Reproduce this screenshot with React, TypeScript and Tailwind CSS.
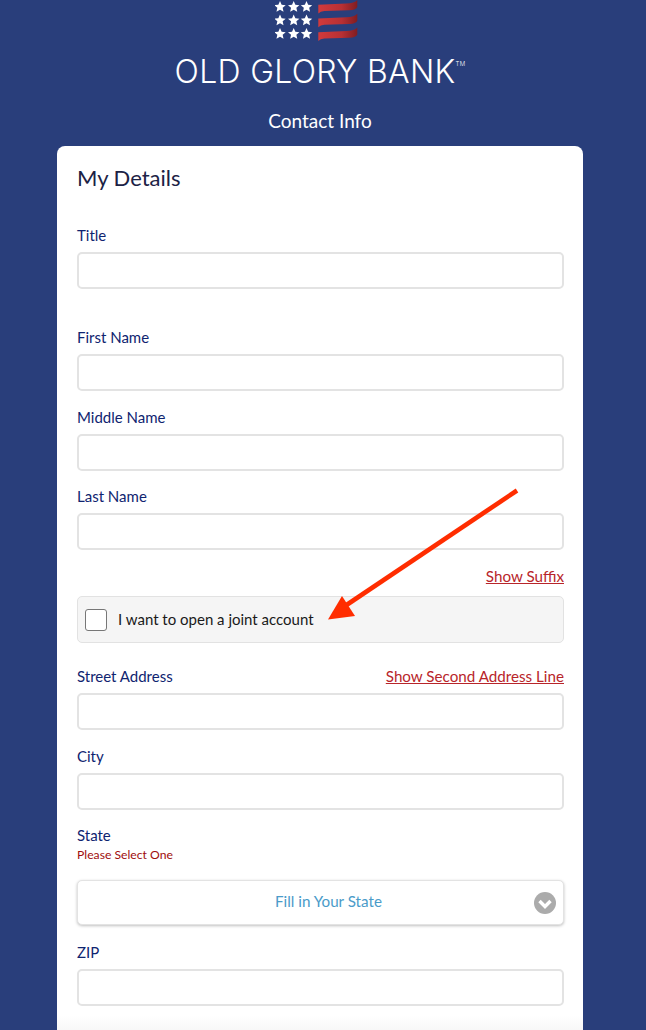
import React from "react";

const Star = ({ x, y }: { x: number; y: number }) => {
  const pts: string[] = [];
  for (let i = 0; i < 10; i++) {
    const r = i % 2 === 0 ? 6 : 2.8;
    const a = -Math.PI / 2 + (i * Math.PI) / 5;
    pts.push(`${(x + r * Math.cos(a)).toFixed(2)},${(y + r * Math.sin(a)).toFixed(2)}`);
  }
  return <polygon points={pts.join(" ")} fill="#fff" />;
};

const FlagLogo = () => (
  <svg width="84" height="44" viewBox="0 0 84 44" className="block">
    <defs>
      <linearGradient id="stripe" x1="0" x2="1" y1="0" y2="0">
        <stop offset="0" stopColor="#d23a3c" />
        <stop offset="0.6" stopColor="#b83034" />
        <stop offset="1" stopColor="#7f1d22" />
      </linearGradient>
    </defs>
    {[7, 20.5, 34].map((y) =>
      [5, 18.7, 31.5].map((x) => <Star key={`${x}-${y}`} x={x} y={y} />)
    )}
    {[0, 13.7, 27.4].map((dy) => (
      <path
        key={dy}
        transform={`translate(43.3 ${dy})`}
        fill="url(#stripe)"
        d="M0 4.8 L28 3.6 Q36 3.3 39 0 L39 7 Q38 9.8 31 10.3 L6 11 Q2 11.2 0 13.6 Z"
      />
    ))}
  </svg>
);

const Field = ({ label, right, className = "" }: { label: string; right?: string; className?: string }) => (
  <div className={className}>
    <div className="flex h-[22px] items-center justify-between">
      <label className="text-[15px] leading-[22px] text-[#0f2470]">{label}</label>
      {right && <a className="text-[15.2px] leading-[22px] text-[#b8252a] underline">{right}</a>}
    </div>
    <input className="mt-[6px] block h-[37px] w-full rounded-[5px] border-2 border-[#e3e3e3] bg-white" />
  </div>
);

export default function App() {
  return (
    <div className="relative h-[1030px] overflow-hidden bg-[#293e7b] font-['Lato','Open_Sans',sans-serif]">
      <div className="flex w-[640px] flex-col items-center">
        <div className="ml-[-6px]"><FlagLogo /></div>
        <div className="mt-[8px] flex h-[40px] items-center font-['Inter',sans-serif] text-[32px] leading-[40px] font-light tracking-[0.3px] text-white">
          OLD GLORY BANK
          <span className="mb-[16px] text-[6px] leading-[8px]">TM</span>
        </div>
        <h1 className="mt-[15px] text-[19px] leading-[28px] text-white">Contact Info</h1>
        <main className="mt-[11px] h-[900px] w-[526px] rounded-t-[8px] bg-white pl-[20px] pr-[19px] pt-[17px]">
          <h2 className="text-[22px] leading-[30px] text-[#1c2245]">My Details</h2>
          <Field label="Title" className="mt-[31px]" />
          <Field label="First Name" className="mt-[37px]" />
          <Field label="Middle Name" className="mt-[14.5px]" />
          <Field label="Last Name" className="mt-[14.5px]" />
          <div className="mt-[15px] text-right text-[15.2px] leading-[22px]">
            <a className="text-[#b8252a] underline">Show Suffix</a>
          </div>
          <div className="mt-[9px] flex h-[47px] items-center rounded-[5px] border border-[#e2e2e2] bg-[#f5f5f5] pl-[7px]">
            <span className="h-[22px] w-[22px] rounded-[3px] border border-[#777] bg-white" />
            <span className="ml-[11px] text-[15px] text-[#1a1a1a]">I want to open a joint account</span>
          </div>
          <Field label="Street Address" right="Show Second Address Line" className="mt-[22px]" />
          <Field label="City" className="mt-[15px]" />
          <div className="mt-[14px] text-[15px] leading-[23px] text-[#0f2470]">State</div>
          <div className="text-[12.2px] leading-[16px] text-[#a00d0d]">Please Select One</div>
          <div className="relative mt-[17px] flex h-[45px] items-center justify-center rounded-[5px] border border-[#e3e3e3] bg-white pb-[3px] pl-[16px] shadow-[0_1px_3px_rgba(0,0,0,0.25)]">
            <span className="text-[15.2px] text-[#4a9bc9]">Fill in Your State</span>
            <svg width="22" height="22" viewBox="0 0 22 22" className="absolute right-[7px] top-[11px]">
              <circle cx="11" cy="11" r="11" fill="#ababab" />
              <path d="M5.5 9 L11 14.5 L16.5 9" fill="none" stroke="#fff" strokeWidth="3.4" />
            </svg>
          </div>
          <Field label="ZIP" className="mt-[16px]" />
        </main>
      </div>
      <div className="pointer-events-none absolute bottom-0 left-[57px] h-[15px] w-[526px] bg-gradient-to-b from-transparent to-[#f8f8f8]" />
      <svg className="pointer-events-none absolute left-0 top-0" width="646" height="1030" viewBox="0 0 646 1030">
        <line x1="517" y1="490.5" x2="345" y2="606" stroke="#ff2d00" strokeWidth="4.6" />
        <polygon points="328,619.5 342,596 355,616" fill="#ff2d00" />
      </svg>
    </div>
  );
}
